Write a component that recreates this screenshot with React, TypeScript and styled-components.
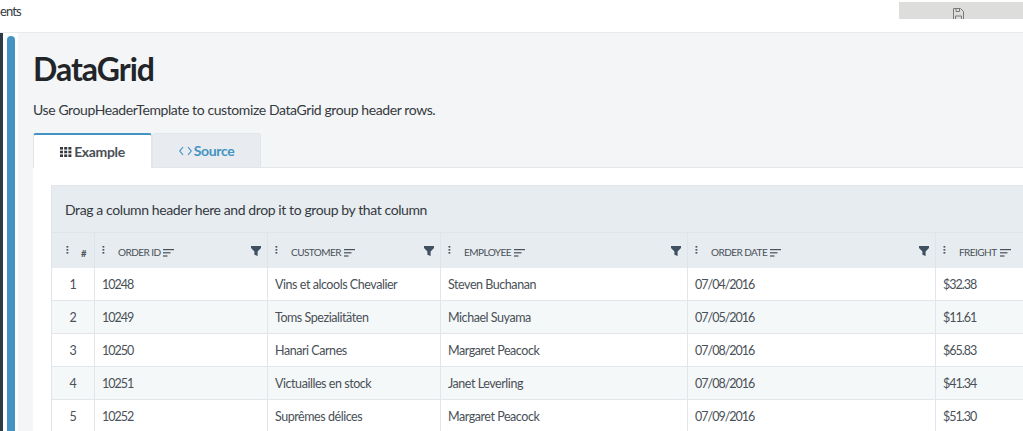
import styled, { createGlobalStyle } from "styled-components";

const columns = [
  { title: "ORDER ID", filter: true },
  { title: "CUSTOMER", filter: true },
  { title: "EMPLOYEE", filter: true },
  { title: "ORDER DATE", filter: true },
  { title: "FREIGHT", filter: false },
];

const rows = [
  ["1", "10248", "Vins et alcools Chevalier", "Steven Buchanan", "07/04/2016", "$32.38"],
  ["2", "10249", "Toms Spezialitäten", "Michael Suyama", "07/05/2016", "$11.61"],
  ["3", "10250", "Hanari Carnes", "Margaret Peacock", "07/08/2016", "$65.83"],
  ["4", "10251", "Victuailles en stock", "Janet Leverling", "07/08/2016", "$41.34"],
  ["5", "10252", "Suprêmes délices", "Margaret Peacock", "07/09/2016", "$51.30"],
];

const Kebab = () => (
  <KebabIcon width="3" height="9" viewBox="0 0 3 9">
    <rect x="0.5" y="0" width="1.8" height="1.6" />
    <rect x="0.5" y="3" width="1.8" height="1.6" />
    <rect x="0.5" y="6" width="1.8" height="1.6" />
  </KebabIcon>
);

const SortLines = () => (
  <SortIcon width="11" height="8" viewBox="0 0 11 8">
    <rect x="0" y="0" width="11" height="1.2" />
    <rect x="0" y="3.2" width="7.5" height="1.2" />
    <rect x="0" y="6.4" width="4.5" height="1.2" />
  </SortIcon>
);

const Funnel = () => (
  <FunnelIcon width="10" height="10" viewBox="0 0 10 10">
    <path d="M0 0h10v2L6.6 5.4V10L3.4 8.8V5.4L0 2z" />
  </FunnelIcon>
);

export default function App() {
  return (
    <>
      <GlobalStyle />
      <Page>
        <TopBar>
          <TopLabel>ents</TopLabel>
          <SaveButton>
            <svg width="11" height="13" viewBox="0 0 11 13" fill="none" stroke="#77787a" strokeWidth="1">
              <path d="M0.5 0.5h7l3 3v9h-10z" />
              <path d="M3 0.5v3h3.5v-3" />
              <path d="M2.5 12.5v-4.5h6v4.5" />
            </svg>
          </SaveButton>
        </TopBar>
        <Body>
          <DarkRail />
          <ScrollTrack>
            <ScrollThumb />
          </ScrollTrack>
          <Main>
            <Title>DataGrid</Title>
            <Description>Use GroupHeaderTemplate to customize DataGrid group header rows.</Description>
            <Tabs>
              <Tab $active>
                <svg width="12" height="10" viewBox="0 0 12 10" fill="#343a40">
                  {[0, 3.7, 7.4].map((y) =>
                    [0, 4.2, 8.4].map((x) => <rect key={`${x}-${y}`} x={x} y={y} width="3" height="2.6" />)
                  )}
                </svg>
                Example
              </Tab>
              <Tab>
                <svg width="13" height="10" viewBox="0 0 13 10" fill="none" stroke="#4393c3" strokeWidth="1.2">
                  <path d="M4 1L0.8 5L4 9" />
                  <path d="M9 1L12.2 5L9 9" />
                </svg>
                Source
              </Tab>
            </Tabs>
            <TabPane>
              <GridBox>
                <GroupPanel>Drag a column header here and drop it to group by that column</GroupPanel>
                <GridTable>
                  <HeaderIndex>
                    <Kebab />
                    <IndexMark>#</IndexMark>
                  </HeaderIndex>
                  {columns.map((c) => (
                    <HeaderCell key={c.title}>
                      <Kebab />
                      <HeaderTitle>{c.title}</HeaderTitle>
                      <SortLines />
                      {c.filter && <Funnel />}
                    </HeaderCell>
                  ))}
                  {rows.map((row, i) =>
                    row.map((value, j) => (
                      <Cell
                        key={j + "-" + i}
                        $odd={i % 2 === 1}
                        $center={j === 0}
                        $numeric={j === 1 || j === 4 || j === 5}
                      >
                        {value}
                      </Cell>
                    ))
                  )}
                </GridTable>
              </GridBox>
            </TabPane>
          </Main>
        </Body>
      </Page>
    </>
  );
}

const GlobalStyle = createGlobalStyle`
  html, body {
    margin: 0;
    padding: 0;
    background: #fff;
    overflow: hidden;
  }
  * {
    box-sizing: border-box;
  }
`;

const Page = styled.div`
  width: 1023px;
  height: 431px;
  overflow: hidden;
  display: flex;
  flex-direction: column;
  font-family: Lato, "Noto Sans", sans-serif;
  color: #3f474e;
`;

const TopBar = styled.div`
  height: 33px;
  flex: none;
  display: flex;
  justify-content: space-between;
  align-items: flex-start;
  background: #fff;
  border-bottom: 1px solid #e8eaec;
`;

const TopLabel = styled.div`
  font-size: 13px;
  line-height: 22px;
  letter-spacing: -0.9px;
  color: #343a40;
`;

const SaveButton = styled.div`
  width: 124px;
  height: 17px;
  margin-top: 2px;
  padding-top: 6px;
  padding-right: 5px;
  background: #dddddc;
  overflow: hidden;
  display: flex;
  justify-content: center;
`;

const Body = styled.div`
  flex: 1;
  min-height: 0;
  display: flex;
`;

const DarkRail = styled.div`
  width: 3px;
  flex: none;
  background: #2c3b44;
`;

const ScrollTrack = styled.div`
  width: 15px;
  flex: none;
  padding: 3px 3px 0 4px;
  background: #fff;
`;

const ScrollThumb = styled.div`
  height: 100%;
  background: #4393c3;
  border-radius: 4px 4px 0 0;
`;

const Main = styled.div`
  flex: 1;
  min-width: 0;
  padding: 14px 0 0 15px;
  background: #f4f5f7;
`;

const Title = styled.h1`
  margin: 0;
  font-size: 32px;
  line-height: 44px;
  font-weight: 700;
  letter-spacing: -1px;
  color: #212529;
`;

const Description = styled.p`
  margin: 9px 0 0;
  height: 28px;
  font-size: 14px;
  line-height: 20px;
  letter-spacing: -0.4px;
  color: #343a40;
`;

const Tabs = styled.div`
  display: flex;
  height: 35px;
  margin-top: 5px;
  border-bottom: 1px solid #e2e6ea;
`;

const Tab = styled.div<{ $active?: boolean }>`
  height: 35px;
  width: ${(p) => (p.$active ? "119px" : "109px")};
  display: flex;
  align-items: center;
  justify-content: center;
  gap: 2px;
  font-size: 14px;
  font-weight: 700;
  letter-spacing: -0.35px;
  color: ${(p) => (p.$active ? "#495057" : "#4393c3")};
  background: ${(p) => (p.$active ? "#fff" : "#e8ecf0")};
  border: 1px solid #e2e6ea;
  border-top: ${(p) => (p.$active ? "2px solid #4393c3" : "1px solid #e2e6ea")};
  border-bottom: ${(p) => (p.$active ? "0" : "1px solid #e2e6ea")};
  border-radius: 3px 3px 0 0;
`;

const TabPane = styled.div`
  background: #fff;
  padding: 17px 0 0 18px;
  height: 300px;
`;

const GridBox = styled.div`
  width: 1100px;
  border: 1px solid #e2e6ea;
  border-right: 0;
  border-bottom: 0;
`;

const GroupPanel = styled.div`
  height: 47px;
  padding-left: 13px;
  display: flex;
  align-items: center;
  font-size: 14px;
  letter-spacing: -0.4px;
  color: #343a40;
  background: #e7ecf0;
  border-bottom: 1px solid #e0e5e9;
`;

const GridTable = styled.div`
  display: grid;
  grid-template-columns: 43px 173px 173px 247px 248px 1fr;
  grid-auto-rows: 33px;
  grid-template-rows: 35px;
`;

const HeaderIndex = styled.div`
  display: flex;
  align-items: flex-start;
  padding: 13px 0 0 14px;
  gap: 12px;
  background: #e7ecf0;
  border-right: 1px solid #dfe4e8;
`;

const IndexMark = styled.span`
  font-size: 9.5px;
  line-height: 12px;
  margin-top: 2px;
  font-weight: 700;
  color: #495057;
`;

const HeaderCell = styled.div`
  display: flex;
  align-items: flex-start;
  padding: 13px 6px 0 7px;
  background: #e7ecf0;
  border-right: 1px solid #dfe4e8;
`;

const HeaderTitle = styled.span`
  margin-left: 13px;
  margin-right: 3px;
  font-size: 10px;
  line-height: 13px;
  letter-spacing: -0.55px;
  color: #495057;
`;

const KebabIcon = styled.svg`
  flex: none;
  fill: #495057;
`;

const SortIcon = styled.svg`
  flex: none;
  margin-top: 3px;
  fill: #495057;
`;

const FunnelIcon = styled.svg`
  flex: none;
  margin-left: auto;
  fill: #3f5060;
`;

const Cell = styled.div<{ $odd?: boolean; $center?: boolean; $numeric?: boolean }>`
  display: flex;
  align-items: center;
  justify-content: ${(p) => (p.$center ? "center" : "flex-start")};
  padding: ${(p) => (p.$center ? "0" : "0 7px")};
  font-size: 12.5px;
  letter-spacing: ${(p) => (p.$numeric ? "-1px" : "-0.45px")};
  color: #495057;
  background: ${(p) => (p.$odd ? "#f5f8f9" : "#fff")};
  border-right: 1px solid #e2e6ea;
  border-bottom: 1px solid #e2e6ea;
`;
